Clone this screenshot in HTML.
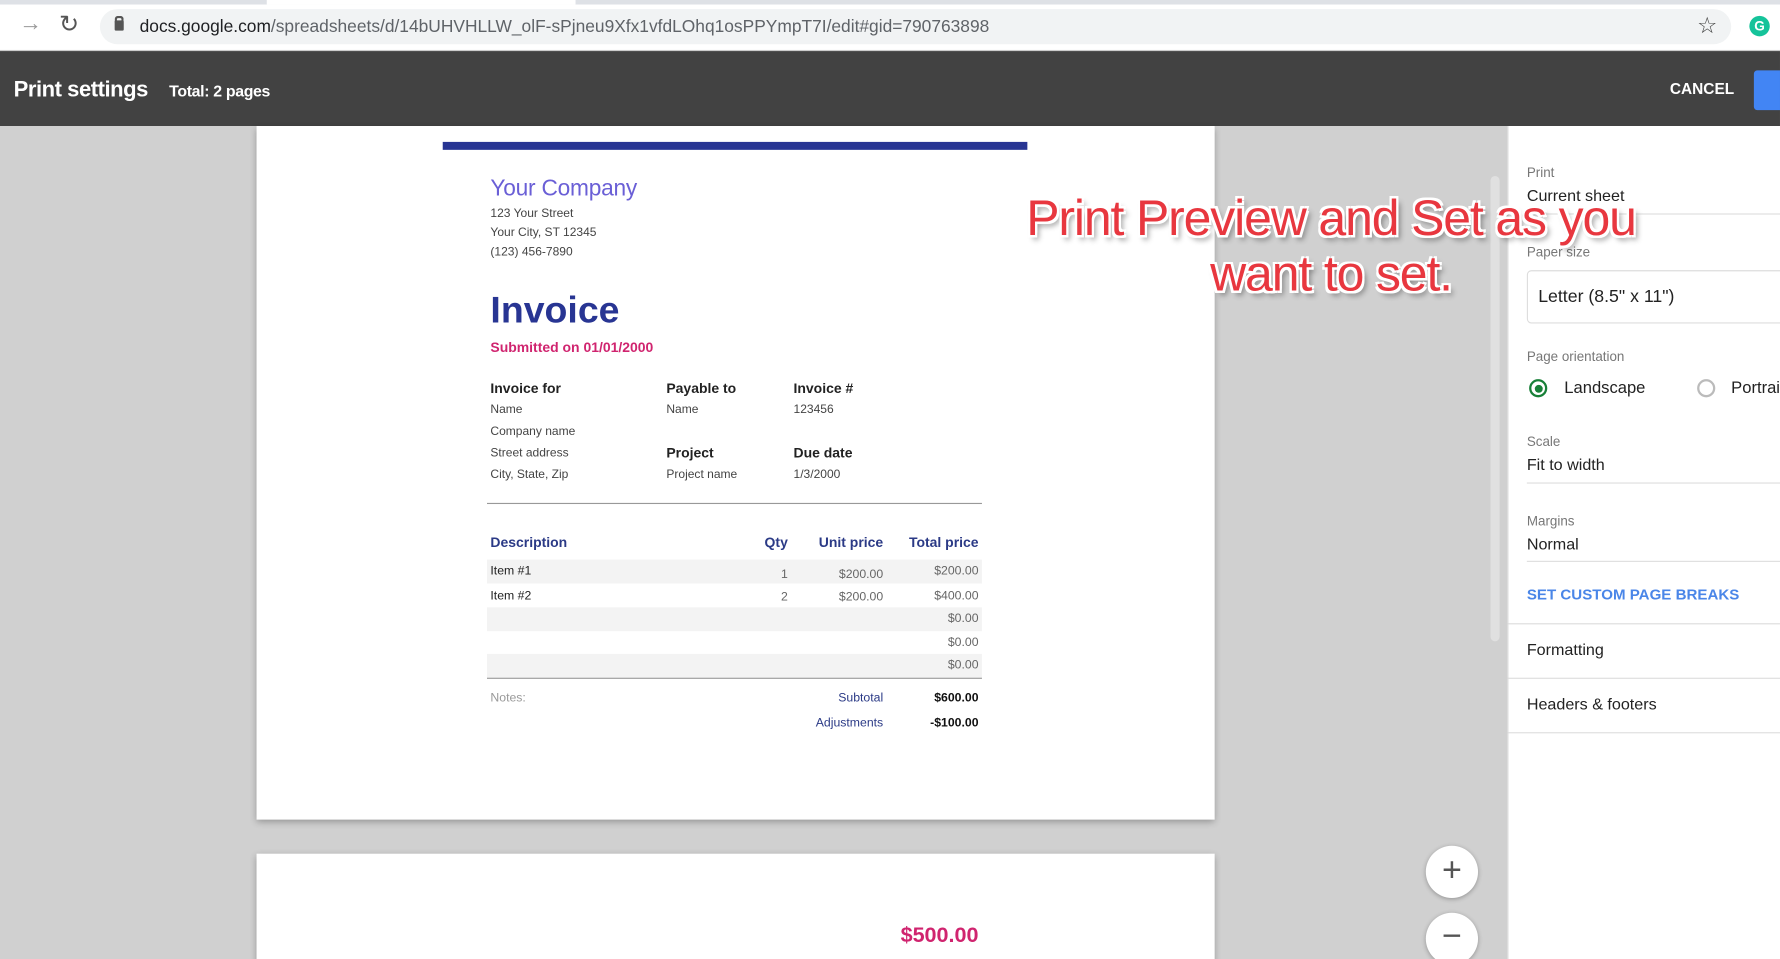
<!DOCTYPE html>
<html><head><meta charset="utf-8"><style>
html,body{margin:0;padding:0;width:1780px;height:959px;overflow:hidden;background:#fff}
#w{position:absolute;left:0;top:0;width:1568px;height:845px;transform:scale(1.13520);transform-origin:0 0;font-family:"Liberation Sans",Arial,sans-serif;overflow:hidden}
.a{position:absolute;white-space:nowrap}
.s{font-size:10.6px;color:#444}
.h{font-size:12.3px;font-weight:bold;color:#222}
.th{font-size:12.3px;font-weight:bold;color:#2b3a86}
.r{text-align:right}
.g{font-size:10.8px;color:#666}
.lbl{font-size:11.8px;color:#777}
.val{font-size:14.2px;color:#222}
.line{position:absolute;left:1345px;width:240px;height:1px;background:#ddd}
</style></head><body><div id="w">
<div class="a" style="left:0;top:0;width:1568px;height:4px;background:#dee1e6"></div>
<div class="a" style="left:235px;top:0;width:272px;height:4px;background:#fff"></div>
<div class="a" style="left:0;top:44px;width:1568px;height:1px;background:#ccc"></div>
<div class="a" style="left:17px;top:10px;font-size:20px;color:#999">→</div>
<div class="a" style="left:52px;top:9px;font-size:21px;color:#555">↻</div>
<div class="a" style="left:88px;top:8px;width:1437px;height:31px;border-radius:16px;background:#f1f3f4"></div>
<div class="a" style="left:101px;top:18px;width:8px;height:9px;background:#555;border-radius:1px"></div>
<div class="a" style="left:101px;top:14px;width:4px;height:4px;border:2px solid #555;border-bottom:none;border-radius:3px 3px 0 0"></div>
<div class="a" style="left:123px;top:15px;font-size:15.3px;color:#202124">docs.google.com<span style="color:#5f6368">/spreadsheets/d/14bUHVHLLW_olF-sPjneu9Xfx1vfdLOhq1osPPYmpT7I/edit#gid=790763898</span></div>
<div class="a" style="left:1495px;top:10px;font-size:20px;color:#444">☆</div>
<div class="a" style="left:1541px;top:14px;width:18px;height:18px;border-radius:50%;background:#15c39a;color:#fff;font-size:12px;font-weight:bold;text-align:center;line-height:18px">G</div>

<div class="a" style="left:0;top:45px;width:1568px;height:66px;background:#424242"></div>
<div class="a" style="left:12px;top:68px;font-size:19.4px;font-weight:bold;color:#fff;letter-spacing:-0.4px">Print settings</div>
<div class="a" style="left:149px;top:72px;font-size:14px;font-weight:bold;color:#fff;letter-spacing:-0.3px">Total: 2 pages</div>
<div class="a" style="left:1471px;top:71px;font-size:13.6px;font-weight:bold;color:#fff">CANCEL</div>
<div class="a" style="left:1545px;top:62px;width:30px;height:35px;background:#4285f4;border-radius:3px"></div>

<div class="a" style="left:0;top:111px;width:1328px;height:734px;background:#d0d0d0"></div>
<div class="a" style="left:226px;top:111px;width:844px;height:611px;background:#fff;box-shadow:0 2px 6px rgba(0,0,0,.3)"></div>
<div class="a" style="left:226px;top:752px;width:844px;height:100px;background:#fff;box-shadow:0 2px 6px rgba(0,0,0,.3)"></div>
<div class="a" style="left:1313px;top:155px;width:8px;height:410px;background:#e0e0e0;border-radius:4px"></div>
<div class="a" style="left:1256px;top:745px;width:46px;height:46px;border-radius:50%;background:#fff;box-shadow:0 1px 4px rgba(0,0,0,.3);text-align:center;line-height:44px;font-size:30px;color:#555">+</div>
<div class="a" style="left:1256px;top:804px;width:46px;height:46px;border-radius:50%;background:#fff;box-shadow:0 1px 4px rgba(0,0,0,.3);text-align:center;line-height:42px;font-size:30px;color:#555">−</div>

<div class="a" style="left:390px;top:125px;width:515px;height:7px;background:#283593"></div>
<div class="a" style="left:432px;top:155px;font-size:20px;color:#6a5fd6;letter-spacing:-0.2px">Your Company</div>
<div class="a s" style="left:432px;top:182px">123 Your Street</div>
<div class="a s" style="left:432px;top:199px">Your City, ST 12345</div>
<div class="a s" style="left:432px;top:216px">(123) 456-7890</div>
<div class="a" style="left:432px;top:254px;font-size:33px;font-weight:bold;color:#283593">Invoice</div>
<div class="a" style="left:432px;top:299px;font-size:12.3px;font-weight:bold;color:#d0246f">Submitted on 01/01/2000</div>
<div class="a h" style="left:432px;top:335px">Invoice for</div>
<div class="a h" style="left:587px;top:335px">Payable to</div>
<div class="a h" style="left:699px;top:335px">Invoice #</div>
<div class="a s" style="left:432px;top:355px">Name</div>
<div class="a s" style="left:587px;top:355px">Name</div>
<div class="a s" style="left:699px;top:355px">123456</div>
<div class="a s" style="left:432px;top:374px">Company name</div>
<div class="a s" style="left:432px;top:393px">Street address</div>
<div class="a h" style="left:587px;top:392px">Project</div>
<div class="a h" style="left:699px;top:392px">Due date</div>
<div class="a s" style="left:432px;top:412px">City, State, Zip</div>
<div class="a s" style="left:587px;top:412px">Project name</div>
<div class="a s" style="left:699px;top:412px">1/3/2000</div>
<div class="a" style="left:429px;top:443px;width:436px;height:1px;background:#999"></div>
<div class="a th" style="left:432px;top:471px">Description</div>
<div class="a th r" style="left:640px;top:471px;width:54px">Qty</div>
<div class="a th r" style="left:700px;top:471px;width:78px">Unit price</div>
<div class="a th r" style="left:780px;top:471px;width:82px">Total price</div>
<div class="a" style="left:429px;top:493px;width:436px;height:21px;background:#f3f3f3"></div>
<div class="a" style="left:429px;top:535px;width:436px;height:21px;background:#f3f3f3"></div>
<div class="a" style="left:429px;top:576px;width:436px;height:21px;background:#f3f3f3"></div>
<div class="a" style="left:429px;top:597px;width:436px;height:1px;background:#999"></div>
<div class="a" style="left:432px;top:497px;font-size:10.8px;color:#222">Item #1</div>
<div class="a" style="left:432px;top:519px;font-size:10.8px;color:#222">Item #2</div>
<div class="a g r" style="left:640px;top:500px;width:54px">1</div>
<div class="a g r" style="left:640px;top:520px;width:54px">2</div>
<div class="a g r" style="left:700px;top:500px;width:78px">$200.00</div>
<div class="a g r" style="left:700px;top:520px;width:78px">$200.00</div>
<div class="a g r" style="left:780px;top:497px;width:82px">$200.00</div>
<div class="a g r" style="left:780px;top:519px;width:82px">$400.00</div>
<div class="a g r" style="left:780px;top:539px;width:82px">$0.00</div>
<div class="a g r" style="left:780px;top:560px;width:82px">$0.00</div>
<div class="a g r" style="left:780px;top:580px;width:82px">$0.00</div>
<div class="a" style="left:432px;top:609px;font-size:10.8px;color:#999">Notes:</div>
<div class="a r" style="left:680px;top:609px;width:98px;font-size:10.8px;color:#2b3a86">Subtotal</div>
<div class="a r" style="left:680px;top:631px;width:98px;font-size:10.8px;color:#2b3a86">Adjustments</div>
<div class="a r" style="left:780px;top:609px;width:82px;font-size:10.8px;font-weight:bold;color:#111">$600.00</div>
<div class="a r" style="left:780px;top:631px;width:82px;font-size:10.8px;font-weight:bold;color:#111">-$100.00</div>
<div class="a r" style="left:760px;top:814px;width:102px;font-size:19px;font-weight:bold;color:#d0246f">$500.00</div>

<div class="a" style="left:1328px;top:111px;width:240px;height:734px;background:#fff;border-left:1px solid #e5e5e5"></div>
<div class="a lbl" style="left:1345px;top:145px">Print</div>
<div class="a val" style="left:1345px;top:165px">Current sheet</div>
<div class="line" style="top:188px"></div>
<div class="a lbl" style="left:1345px;top:215px">Paper size</div>
<div class="a" style="left:1345px;top:238px;width:240px;height:45px;border:1px solid #ddd;border-radius:4px"></div>
<div class="a" style="left:1355px;top:253px;font-size:15.6px;color:#222">Letter (8.5" x 11")</div>
<div class="a lbl" style="left:1345px;top:307px">Page orientation</div>
<div class="a" style="left:1347px;top:334px;width:12px;height:12px;border:2.5px solid #188038;border-radius:50%"></div>
<div class="a" style="left:1352px;top:339px;width:7px;height:7px;background:#188038;border-radius:50%"></div>
<div class="a" style="left:1378px;top:334px;font-size:14.6px;color:#222">Landscape</div>
<div class="a" style="left:1495px;top:334px;width:12px;height:12px;border:2px solid #bbb;border-radius:50%"></div>
<div class="a" style="left:1525px;top:334px;font-size:14.6px;color:#222">Portrait</div>
<div class="a lbl" style="left:1345px;top:382px">Scale</div>
<div class="a val" style="left:1345px;top:402px">Fit to width</div>
<div class="line" style="top:425px"></div>
<div class="a lbl" style="left:1345px;top:452px">Margins</div>
<div class="a val" style="left:1345px;top:472px">Normal</div>
<div class="line" style="top:494px"></div>
<div class="a" style="left:1345px;top:516px;font-size:13.3px;font-weight:bold;color:#4a86e8">SET CUSTOM PAGE BREAKS</div>
<div class="a" style="left:1328px;top:549px;width:240px;height:1px;background:#ddd"></div>
<div class="a val" style="left:1345px;top:565px">Formatting</div>
<div class="a" style="left:1328px;top:597px;width:240px;height:1px;background:#ddd"></div>
<div class="a val" style="left:1345px;top:613px">Headers &amp; footers</div>
<div class="a" style="left:1328px;top:645px;width:240px;height:1px;background:#ddd"></div>

<div class="a" style="left:904px;top:168px;font-size:44px;color:#e8373f;letter-spacing:-1px;text-shadow:-2px -2px 0 #fff,2px -2px 0 #fff,-2px 2px 0 #fff,2px 2px 0 #fff,0 0 3px #fff,3px 4px 5px rgba(0,0,0,.45)">Print Preview and Set as you</div>
<div class="a" style="left:1066px;top:217px;font-size:44px;color:#e8373f;letter-spacing:-1px;text-shadow:-2px -2px 0 #fff,2px -2px 0 #fff,-2px 2px 0 #fff,2px 2px 0 #fff,0 0 3px #fff,3px 4px 5px rgba(0,0,0,.45)">want to set.</div>
</div></body></html>
